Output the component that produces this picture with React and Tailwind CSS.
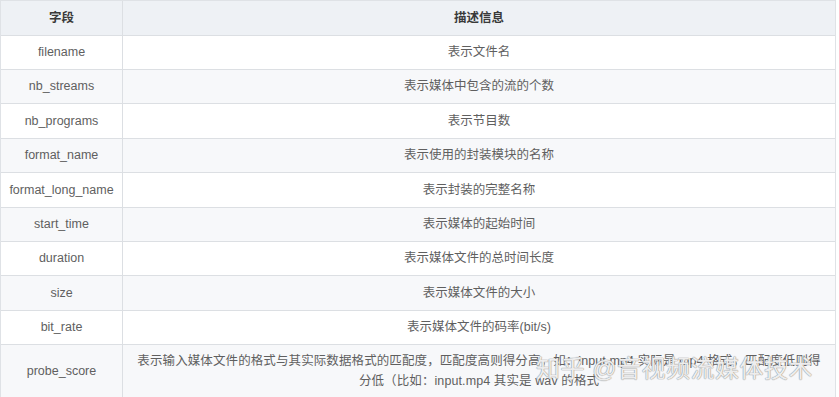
import React from 'react';

const rows = [
  { name: 'filename', desc: '表示文件名', h: 'h-[34px]' },
  { name: 'nb_streams', desc: '表示媒体中包含的流的个数', h: 'h-[34px]' },
  { name: 'nb_programs', desc: '表示节目数', h: 'h-[35px]' },
  { name: 'format_name', desc: '表示使用的封装模块的名称', h: 'h-[34px]' },
  { name: 'format_long_name', desc: '表示封装的完整名称', h: 'h-[35px]' },
  { name: 'start_time', desc: '表示媒体的起始时间', h: 'h-[34px]' },
  { name: 'duration', desc: '表示媒体文件的总时间长度', h: 'h-[34px]' },
  { name: 'size', desc: '表示媒体文件的大小', h: 'h-[35px]' },
  { name: 'bit_rate', desc: '表示媒体文件的码率(bit/s)', h: 'h-[34px]' },
];

const App = () => {
  return (
    <div className="relative w-[839px] h-[397px] overflow-hidden bg-white font-['Liberation_Sans','Noto_Sans_CJK_SC',sans-serif] text-[12.5px] text-[#5f5f5f]">
      <div className="w-[836px] border-l border-r border-t border-[#dfe2e6]">
        {/* Header */}
        <div className="flex h-[35px] bg-[#eef1f5] border-b border-[#dcdfe3] font-bold text-[#3a3a3a]">
          <div className="w-[122px] shrink-0 flex items-center justify-center border-r border-[#dcdfe3]">字段</div>
          <div className="flex-1 flex items-center justify-center">描述信息</div>
        </div>

        {rows.map((row, i) => (
          <div
            key={row.name}
            className={`flex ${row.h} border-b border-[#dcdfe3] ${i % 2 === 1 ? 'bg-[#f7f8fa]' : 'bg-white'}`}
          >
            <div className="w-[122px] shrink-0 flex items-center justify-center border-r border-[#dcdfe3]">{row.name}</div>
            <div className="flex-1 flex items-center justify-center">{row.desc}</div>
          </div>
        ))}

        {/* probe_score */}
        <div className="flex h-[53px] bg-[#f7f8fa]">
          <div className="w-[122px] shrink-0 flex items-center justify-center border-r border-[#dcdfe3]">probe_score</div>
          <div className="flex-1 flex items-center justify-center text-center leading-[20px] pb-[2px] tracking-[0.1px]">
            <p>
              表示输入媒体文件的格式与其实际数据格式的匹配度，匹配度高则得分高，如：input.mp4 实际是 mp4 格式，匹配度低则得
              <br />
              分低（比如：input.mp4 其实是 wav 的格式
            </p>
          </div>
        </div>
      </div>

      {/* Watermark */}
      <div className="absolute left-[536px] top-[353px] text-[24px] leading-[32px] text-white/85 tracking-[0.5px] whitespace-nowrap [text-shadow:0_0_1px_#888,0_0_1px_#888]">
        知乎 @音视频流媒体技术
      </div>
    </div>
  );
};

export default App;
